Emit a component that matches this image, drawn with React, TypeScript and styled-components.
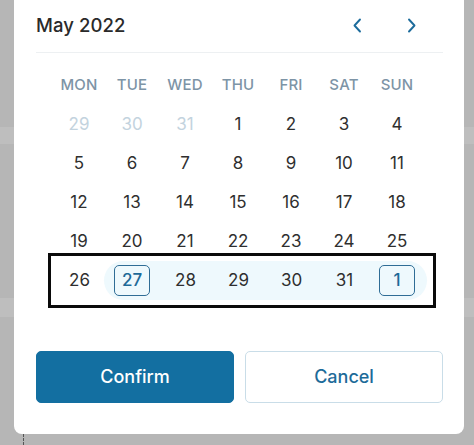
import React from "react";
import styled, { createGlobalStyle } from "styled-components";

const GlobalStyle = createGlobalStyle`
  html, body {
    margin: 0;
    padding: 0;
  }
  body {
    width: 474px;
    height: 445px;
    overflow: hidden;
    font-family: Inter, "Noto Sans", "Liberation Sans", sans-serif;
    background:
      linear-gradient(
        to bottom,
        #b6b6b6 0px,
        #b6b6b6 127px,
        #bebebe 127px,
        #bebebe 144px,
        #b6b6b6 144px,
        #b6b6b6 298px,
        #bebebe 298px,
        #bebebe 317px,
        #b6b6b6 317px
      );
  }
`;

const Card = styled.div`
  box-sizing: border-box;
  width: 450px;
  height: 434px;
  margin-left: 14px;
  padding: 0 21px 0 22px;
  background: #ffffff;
  border-radius: 0 0 8px 8px;
  display: flex;
  flex-direction: column;
`;

const Header = styled.div`
  height: 53px;
  display: flex;
  align-items: center;
  justify-content: space-between;
  border-bottom: 1px solid #edf0f2;
  box-sizing: border-box;
  padding-bottom: 2px;
`;

const Title = styled.div`
  font-size: 18.5px;
  font-weight: 500;
  color: #2a2a2a;
  letter-spacing: 0.1px;
`;

const Nav = styled.div`
  display: flex;
  align-items: center;
  gap: 31px;
  margin-right: 19px;
`;

const NavButton = styled.button`
  width: 24px;
  height: 24px;
  padding: 0;
  border: none;
  background: transparent;
  display: flex;
  align-items: center;
  justify-content: center;
  color: #1d6c9c;
`;

const Grid = styled.div`
  width: 371px;
  margin: 12px 0 0 16.5px;
  display: grid;
  grid-template-columns: repeat(7, 53px);
  grid-template-rows: repeat(5, 39px) auto;
`;

const WeekDay = styled.div`
  display: flex;
  align-items: center;
  justify-content: center;
  font-size: 15px;
  font-weight: 500;
  color: #7d94a6;
  letter-spacing: 0.2px;
`;

const Day = styled.div<{ $muted?: boolean; $col?: number }>`
  grid-row: 1;
  ${(p) => (p.$col ? `grid-column: ${p.$col};` : "")}
  position: relative;
  display: flex;
  align-items: center;
  justify-content: center;
  font-size: 17px;
  color: ${(p) => (p.$muted ? "#c3d3de" : "#2f2f2f")};
`;

const PlainDay = styled(Day)`
  grid-row: auto;
`;

const Frame = styled.div`
  grid-column: 1 / 8;
  margin: -7.5px -12.5px 0 -4.5px;
  border: 3px solid #0a0a0a;
  padding: 5px 9.5px 5px 2px;
  display: grid;
  grid-template-columns: repeat(7, 53px);
  grid-template-rows: 39px;
`;

const Band = styled.div`
  grid-row: 1;
  grid-column: 2 / 8;
  margin: 0 -2.5px;
  background: #eef9fd;
  border-radius: 20px;
`;

const Picked = styled.span`
  box-sizing: border-box;
  width: 36px;
  height: 31px;
  margin-left: -1px;
  display: flex;
  align-items: center;
  justify-content: center;
  border: 1.5px solid #2f6d96;
  border-radius: 5px;
  color: #1e6a98;
  font-weight: 500;
`;

const Actions = styled.div`
  margin-top: 43px;
  display: flex;
  gap: 11px;
`;

const ActionButton = styled.button<{ $primary?: boolean }>`
  flex: 1;
  height: 52px;
  box-sizing: border-box;
  border-radius: 5px;
  font-family: inherit;
  font-size: 18px;
  font-weight: 500;
  cursor: pointer;
  background: ${(p) => (p.$primary ? "#136fa1" : "#ffffff")};
  color: ${(p) => (p.$primary ? "#ffffff" : "#1d6b99")};
  border: 1.5px solid ${(p) => (p.$primary ? "#136fa1" : "#c9dde8")};
`;

const Dashed = styled.div`
  margin-left: 23px;
  height: 11px;
  border-left: 1px dashed #555;
`;

const Chevron = ({ dir }: { dir: "left" | "right" }) => (
  <svg width="10" height="15" viewBox="0 0 10 15" fill="none">
    <path
      d={dir === "left" ? "M8 1.5 L2.5 7.5 L8 13.5" : "M2 1.5 L7.5 7.5 L2 13.5"}
      stroke="currentColor"
      strokeWidth="1.9"
      strokeLinecap="round"
      strokeLinejoin="round"
    />
  </svg>
);

const weekDays = ["MON", "TUE", "WED", "THU", "FRI", "SAT", "SUN"];
const rows: number[][] = [
  [29, 30, 31, 1, 2, 3, 4],
  [5, 6, 7, 8, 9, 10, 11],
  [12, 13, 14, 15, 16, 17, 18],
  [19, 20, 21, 22, 23, 24, 25],
];
const lastRow = [26, 27, 28, 29, 30, 31, 1];
const picked = [1, 6];

export default function App() {
  return (
    <>
      <GlobalStyle />
      <Card>
        <Header>
          <Title>May 2022</Title>
          <Nav>
            <NavButton aria-label="Previous month">
              <Chevron dir="left" />
            </NavButton>
            <NavButton aria-label="Next month">
              <Chevron dir="right" />
            </NavButton>
          </Nav>
        </Header>
        <Grid>
          {weekDays.map((d) => (
            <WeekDay key={d}>{d}</WeekDay>
          ))}
          {rows.map((row, r) =>
            row.map((n, c) => (
              <PlainDay key={`${r}-${c}`} $muted={r === 0 && n > 7}>
                {n}
              </PlainDay>
            ))
          )}
          <Frame>
            <Band />
            {lastRow.map((n, c) => (
              <Day key={`last-${c}`} $col={c + 1}>
                {picked.includes(c) ? <Picked>{n}</Picked> : n}
              </Day>
            ))}
          </Frame>
        </Grid>
        <Actions>
          <ActionButton $primary>Confirm</ActionButton>
          <ActionButton>Cancel</ActionButton>
        </Actions>
      </Card>
      <Dashed />
    </>
  );
}
